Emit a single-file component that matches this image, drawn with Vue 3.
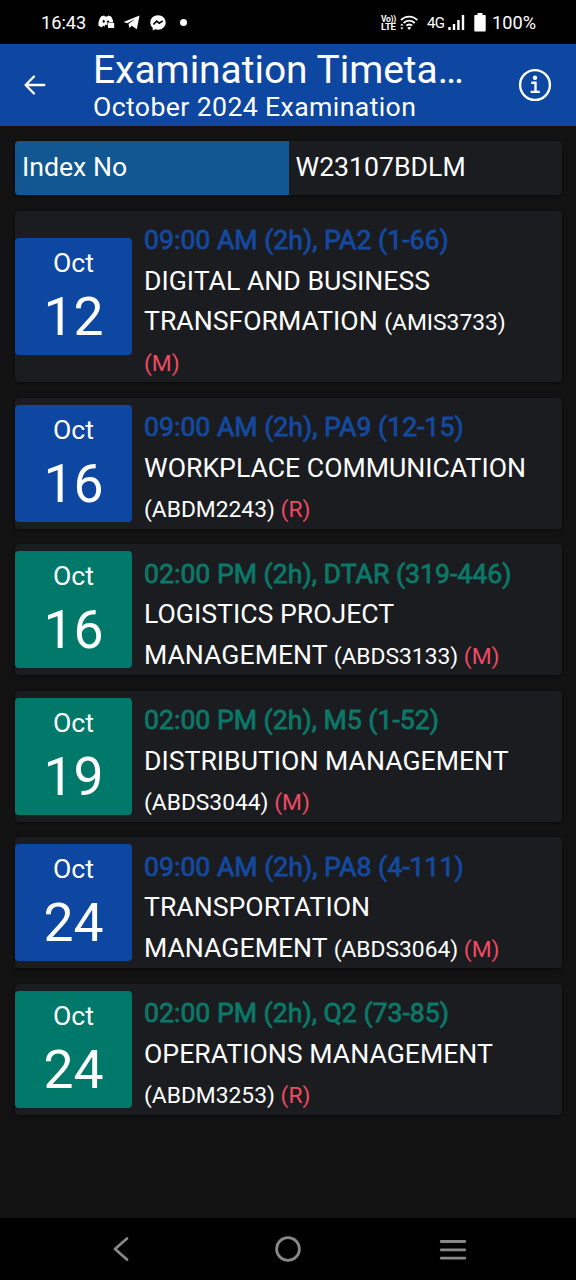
<script setup>
const exams = [
  { day: 12, slot: 'am', time: '09:00 AM (2h), PA2 (1-66)', title: 'DIGITAL AND BUSINESS TRANSFORMATION', code: 'AMIS3733', type: 'M' },
  { day: 16, slot: 'am', time: '09:00 AM (2h), PA9 (12-15)', title: 'WORKPLACE COMMUNICATION', code: 'ABDM2243', type: 'R' },
  { day: 16, slot: 'pm', time: '02:00 PM (2h), DTAR (319-446)', title: 'LOGISTICS PROJECT MANAGEMENT', code: 'ABDS3133', type: 'M' },
  { day: 19, slot: 'pm', time: '02:00 PM (2h), M5 (1-52)', title: 'DISTRIBUTION MANAGEMENT', code: 'ABDS3044', type: 'M' },
  { day: 24, slot: 'am', time: '09:00 AM (2h), PA8 (4-111)', title: 'TRANSPORTATION MANAGEMENT', code: 'ABDS3064', type: 'M' },
  { day: 24, slot: 'pm', time: '02:00 PM (2h), Q2 (73-85)', title: 'OPERATIONS MANAGEMENT', code: 'ABDM3253', type: 'R' },
]
</script>

<template>
  <div class="screen">
    <div class="status">
      <span class="clock">16:43</span>
      <svg class="discord" width="17" height="15" viewBox="0 0 17 15" fill="#fff">
        <path d="M3.2 1.300 6.200.5l.8 1.100h2.300l.9-1.100 2.900.9c1.300 1.900 2 3.800 2.100 6H9.400v4.100H6.100L5 10.600l-1 1.700C2.300 12 1.300 11.400.4 10.600.200 7.100 1.200 3.800 3.200 1.300Z" />
        <ellipse cx="5.700" cy="6.400" rx="1.100" ry="1.400" fill="#000" />
        <path d="M8.700 7.500c-.5-2.600 2.800-2.700 2.600-.5" fill="#000" />
        <path d="M6.400 13.200 7 9.800l2.600.2v2Z" fill="#000" />
        <rect x="10" y="8" width="6.200" height="5" rx=".6" />
      </svg>
      <svg class="telegram" width="17" height="15" viewBox="0 0 17 15" fill="#fff">
        <path d="M.5 6.900 16.500.400 13.800 14.300 8.700 10.700 6.300 13 5.500 8.900 12.600 3.600 4.400 8.300Z" />
      </svg>
      <svg class="messenger" width="16" height="16" viewBox="0 0 16 16">
        <path d="M8 .3C3.600.3.3 3.500.3 7.500c0 2.200.9 4 2.400 5.300v2.600l2.500-1.100c.9.2 1.800.4 2.800.4 4.400 0 7.700-3.200 7.700-7.200S12.400.3 8 .3Z" fill="#fff" />
        <path d="m3.400 9.500 3.200-3.300 2.600 2 3.500-2.300" fill="none" stroke="#000" stroke-width="1.700" />
      </svg>
      <i class="dot"></i>
      <span class="spacer"></span>
      <span class="volte"><b>Vo))</b><b class="lte">LTE</b></span>
      <svg class="wifi" width="18" height="16" viewBox="0 0 18 16" fill="none" stroke="#fff">
        <path d="M1 5.200C5.500.400 12.800.400 17.300 5.200M3.700 8c3-3.200 8-3.200 11 0M6.300 10.700c1.700-1.700 4.200-1.700 5.800 0" stroke-width="1.900" />
        <path d="m9.200 14.900-2-2.100c1.100-1 2.900-1 4 0Z" fill="#fff" stroke="none" />
        <path d="m.2 10.600 1.700-2 1.700 2Zm0 1.800 1.700 2 1.700-2Z" fill="#fff" stroke="none" />
      </svg>
      <span class="net">4G</span>
      <svg class="signal" width="17" height="16" viewBox="0 0 17 16" fill="#fff">
        <rect x=".3" y="12" width="2.400" height="3" /><rect x="4.800" y="9" width="2.400" height="6" />
        <rect x="9.200" y="5" width="2.400" height="10" /><rect x="13.800" y="0" width="2.400" height="15" />
      </svg>
      <svg class="battery" width="12" height="19" viewBox="0 0 12 19" fill="#fff">
        <path d="M3.500 0h5v2H11q.7 0 .7.700v15.100q0 .7-.7.700H1q-.7 0-.7-.7V2.700Q.3 2 1 2h2.500Z" />
      </svg>
      <span class="percent">100%</span>
    </div>

    <header class="appbar">
      <svg class="back" width="22" height="20" viewBox="0 0 22 20" fill="none" stroke="#fff" stroke-width="2.300" stroke-linecap="round" stroke-linejoin="round">
        <path d="M20.300 10H1.700M10 1.500 1.600 10l8.400 8.500" />
      </svg>
      <div class="heading">
        <h1>Examination Timeta…</h1>
        <p>October 2024 Examination</p>
      </div>
      <svg class="info" width="34" height="34" viewBox="0 0 34 34" fill="none" stroke="#fff">
        <circle cx="17" cy="17" r="14.900" stroke-width="2.400" />
        <circle cx="17" cy="9.800" r="2.200" fill="#fff" stroke="none" />
        <path d="M13.300 14.700h4.200v9M12.600 23.900h9.200" stroke-width="2.400" />
      </svg>
    </header>

    <main>
      <section class="index">
        <div class="label">Index No</div>
        <div class="value">W23107BDLM</div>
      </section>
      <article v-for="exam in exams" :key="exam.code" class="card" :class="exam.slot">
        <div class="date">
          <span class="month">Oct</span>
          <span class="day">{{ exam.day }}</span>
        </div>
        <div class="details">
          <div class="time">{{ exam.time }}</div>
          <div class="title">{{ exam.title }} <span class="code">({{ exam.code }})</span><span class="type"> ({{ exam.type }})</span></div>
        </div>
      </article>
    </main>

    <nav>
      <svg width="18" height="26" viewBox="0 0 18 26"><path d="M15 2.500 3 13l12 10.500" /></svg>
      <svg class="home" width="28" height="28" viewBox="0 0 28 28"><circle cx="14" cy="14" r="11.400" /></svg>
      <svg width="28" height="24" viewBox="0 0 28 24"><path d="M2.200 4.500h23.600M2.200 12.800h23.600M2.200 21.100h23.600" /></svg>
    </nav>
  </div>
</template>

<style>
body { background: #121212; overflow: hidden; }
</style>

<style scoped>
.screen { width: 576px; height: 1280px; display: flex; flex-direction: column; background: #121212; color: #fff; font-family: Roboto, sans-serif; font-size: 26.650px; overflow: hidden; }
.status { flex: none; height: 44px; box-sizing: border-box; background: #000; display: flex; align-items: center; padding: 1px 41px 0 41px; font-size: 18.200px; line-height: 22px; white-space: nowrap; }
.status svg { flex: none; }
.clock { width: 57px; }
.telegram { margin-left: 8px; }
.messenger { margin-left: 10px; }
.dot { width: 7px; height: 7px; border-radius: 50%; background: #fff; margin-left: 14px; }
.spacer { flex: 1; }
.volte { display: flex; flex-direction: column; width: 16px; font-size: 8.500px; line-height: 8px; letter-spacing: -.3px; }
.volte b { font-weight: 700; }
.volte .lte { font-size: 9.500px; letter-spacing: -.2px; }
.wifi { margin-left: 3px; }
.net { font-size: 15px; letter-spacing: -.6px; margin-left: 9px; width: 21px; }
.battery { margin-left: 9px; }
.percent { margin-left: 6px; width: 43px; }
.appbar { flex: none; height: 82px; background: #0d47a1; display: flex; align-items: center; padding: 0 24px; }
.back { flex: none; }
.heading { width: 375px; margin-left: 47px; padding-top: 3px; }
h1 { margin: 0; font-size: 38.900px; line-height: 42px; font-weight: 400; white-space: nowrap; }
p { margin: 0; font-size: 26.650px; letter-spacing: .38px; line-height: 33px; white-space: nowrap; }
.info { margin-left: auto; }
main { flex: 1; display: flex; flex-direction: column; gap: 15.500px; padding: 15px 14px 0 15px; }
.index, .card { flex: none; background: #1b1c1f; border-radius: 4px; box-shadow: 0 1px 3px rgba(0, 0, 0, .5); }
.index { height: 54px; display: flex; overflow: hidden; line-height: 52px; }
.label { width: 50%; box-sizing: border-box; padding-left: 7px; background: #125692; }
.value { padding-left: 7px; }
.card { display: flex; align-items: center; }
.date { flex: none; width: 117px; height: 117px; border-radius: 4px; display: flex; flex-direction: column; align-items: center; background: #0d47a1; }
.month { line-height: 50px; }
.day { font-size: 53.500px; line-height: 58px; }
.pm .date { background: #00796b; }
.details { flex: 1; padding: 9.500px 22px 0 12px; line-height: 40.500px; }
.time { color: #1449a0; -webkit-text-stroke: .8px currentColor; }
.pm .time { color: #0b7868; }
.code, .type { font-size: 22.800px; line-height: 1; }
.type { color: #f04a63; }
nav { flex: none; height: 62px; background: #000; display: flex; align-items: center; justify-content: space-between; padding: 0 109px 0 112px; fill: none; stroke: #888; stroke-width: 2.800; stroke-linecap: round; stroke-linejoin: round; }
.home { margin-left: 6px; }
</style>
